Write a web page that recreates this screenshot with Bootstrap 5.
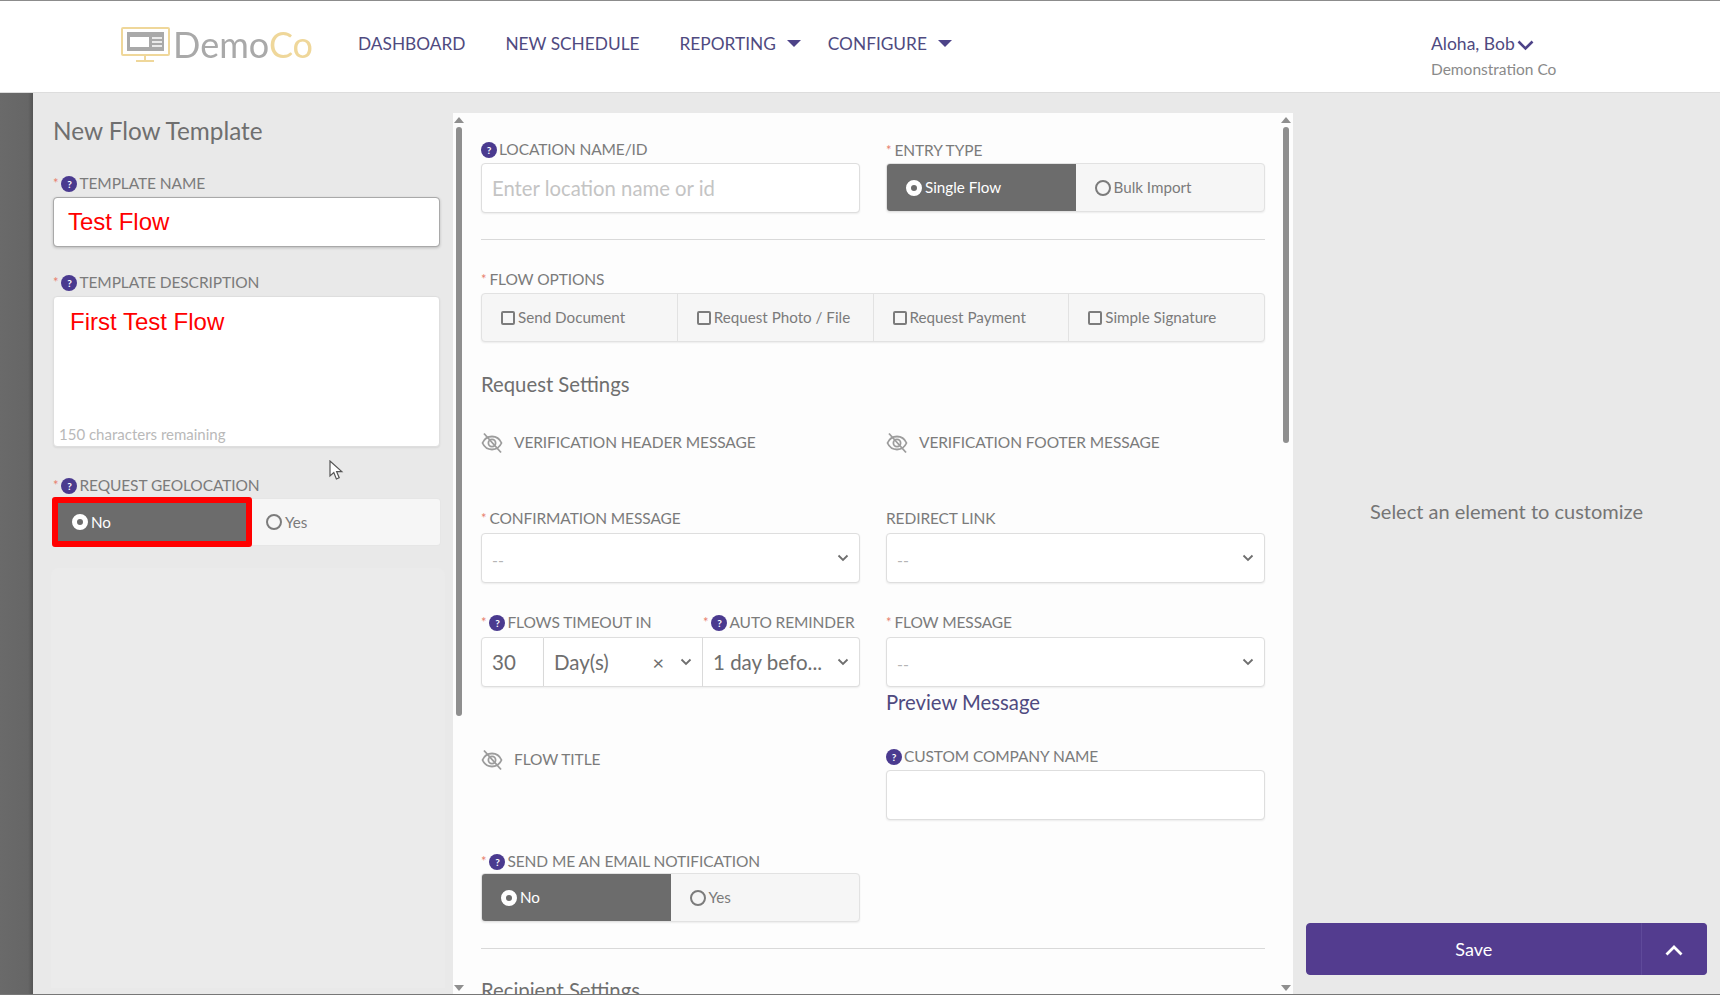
<!DOCTYPE html>
<html lang="en">
<head>
<meta charset="UTF-8">
<meta name="viewport" content="width=device-width, initial-scale=1.0">
<title>New Flow Template</title>
<link href="https://cdn.jsdelivr.net/npm/bootstrap@5.3.3/dist/css/bootstrap.min.css" rel="stylesheet">
<style>
html, body { height: 995px; overflow: hidden; }
body { font-family: Lato, "Open Sans", sans-serif; color: #757575; background: #e9e9e9; border-top: 1px solid #8c8c8c; border-bottom: 1px solid #777; }

/* header */
.top-bar { height: 92px; background: #fff; border-bottom: 1px solid #ddd; padding: 0 0 6px 121px; }
.brand-mark { font-size: 36px; line-height: 1; color: #a9a9a9; margin-left: 3px; margin-top: -2px; }
.brand-mark span { color: #efd79a; }
.brand-wrap { width: 237px; margin-top: 3px; filter: blur(.5px); }
.top-link { font-size: 17.3px; color: #4f4a80; text-decoration: none; line-height: 24px; }
.caret-down { display: inline-block; width: 0; height: 0; border-left: 7px solid transparent; border-right: 7px solid transparent; border-top: 7px solid #4d4388; margin-left: 11px; vertical-align: 3px; }
.user-box { position: absolute; left: 1431px; top: 32px; }
.user-name { font-size: 17.5px; color: #4f4a80; line-height: 24px; }
.user-name svg { margin-left: -2px; }
.user-co { font-size: 15.5px; color: #8a8a8a; line-height: 22px; margin-top: 2px; }

/* columns */
.page-wrap { height: 901px; }
.dark-strip { width: 33px; background: linear-gradient(90deg, #6a6a6a 0, #666 85%, #555 100%); }
.left-col { width: 420px; padding: 0 13px 0 20px; }
.page-title { font-size: 24.3px; font-weight: 400; color: #6f6f6f; line-height: 32px; margin: 22px 0 0 0; }
.main-col { width: 840px; background: #fdfdfd; margin-top: 20px; }
.right-col { width: 427px; padding: 20px 13px 19px 13px; }

/* scroll tracks */
.scroll-track { width: 12px; flex: none; padding-top: 3px; }
.scroll-up { width: 0; height: 0; border-left: 5px solid transparent; border-right: 5px solid transparent; border-bottom: 6px solid #8f8f8f; margin: 1px auto 4px; }
.scroll-down { width: 0; height: 0; border-left: 5px solid transparent; border-right: 5px solid transparent; border-top: 6px solid #8f8f8f; margin: 0 auto; }
.scroll-thumb { width: 6px; background: #8f8f8f; border-radius: 3px; margin: 0 auto; }
.main-form { width: 812px; flex: none; padding: 0 0 0 16px; overflow: hidden; }
.main-form .row { --bs-gutter-x: 26px; --bs-gutter-y: 0; width: 810px; margin-left: 0; margin-right: 0; }
.main-form .row > * { padding-left: 0; padding-right: 26px; }

/* labels */
.fld-label { display: block; font-size: 15.5px; line-height: 20px; color: #7b7b7b; white-space: nowrap; letter-spacing: -.1px; }
.req { color: #e8806f; font-size: 13px; margin-right: 3px; vertical-align: 1px; }
.help-dot { display: inline-block; width: 16px; height: 16px; border-radius: 50%; background: #4a3a8f; color: #fff; font-size: 10px; font-weight: 700; line-height: 16px; text-align: center; margin-right: 2px; vertical-align: 1.500px; }

/* controls */
.fld-input { height: 50px; border: 1px solid #dedede; border-radius: 4px; background-color: #fff; box-shadow: 0 1px 2px rgba(0,0,0,.07); font-size: 20.3px; color: #6e6e6e; padding: 0 10px; }
.fld-input::placeholder { color: #c4c4c4; }
.fld-input:focus { border-color: #dedede; box-shadow: none; }
.annot-input { height: 50px; border: 1px solid #a9a9a9; box-shadow: 0 1px 3px rgba(0,0,0,.2); color: #f00; font-family: "Liberation Sans", Arial, sans-serif; font-size: 24px; padding: 0 14px; border-radius: 4px; }
.note-box { height: 151px; background: #fff; border: 1px solid #dedede; border-radius: 4px; box-shadow: 0 1px 2px rgba(0,0,0,.08); padding: 10px 16px 0; color: #f00; font-family: "Liberation Sans", Arial, sans-serif; font-size: 24px; line-height: 30px; position: relative; }
.note-count { position: absolute; left: 5px; bottom: 2px; font-family: Lato, sans-serif; font-size: 15px; line-height: 20px; color: #b9b9b9; }
.pick-select { height: 50px; display: flex; align-items: center; justify-content: space-between; border: 1px solid #dedede; border-radius: 4px; background: #fff; box-shadow: 0 1px 2px rgba(0,0,0,.07); padding: 0 10px; font-size: 20.5px; color: #6e6e6e; }
.pick-empty { font-size: 16px; color: #b5b5b5; padding-top: 4px; }
.chev-mini { width: 12px; height: 8px; flex: none; }
.clear-x { font-size: 20px; line-height: 1; }

/* toggle groups */
.seg-group { height: 49px; border: 1px solid #e2e2e2; border-radius: 4px; background: #f6f6f6; box-shadow: 0 1px 2px rgba(0,0,0,.07); overflow: hidden; }
.seg-item { flex: 1 1 0; display: flex; align-items: center; padding-left: 19px; font-size: 15.2px; color: #7b7b7b; border-right: 1px solid #e2e2e2; }
.seg-item:last-child { border-right: 0; }
.seg-item.is-on { background: #6c6c6c; color: #fff; border-right: 0; }
.radio-dot { width: 16px; height: 16px; border-radius: 50%; border: 2px solid #7c7c7c; margin-right: 3px; flex: none; }
.is-on .radio-dot { background: #6c6c6c; border: 5px solid #fff; }
.tick-box { width: 14px; height: 14px; border: 2px solid #7c7c7c; border-radius: 2px; margin-right: 3px; flex: none; }
.geo-group { height: 50px; width: 391px; margin-left: -2px; margin-top: 2px; border-color: transparent; background: none; box-shadow: none; overflow: visible; }
.geo-group .seg-item.is-on { flex: none; width: 200px; height: 50px; border: 6px solid #f00; border-radius: 3px; padding-left: 14px; }
.geo-group .seg-item.geo-off { flex: 1 1 0; height: 48px; background: #f6f6f6; border: 1px solid #e6e6e6; border-left: 0; border-radius: 0 4px 4px 0; padding-left: 14px; }

.form-rule { margin: 0; border-top: 1px solid #d9d9d9; opacity: 1; width: 784px; }
.sec-title { font-size: 20.3px; color: #6f6f6f; line-height: 28px; font-weight: 400; margin: 0; }
.hidden-fld { display: flex; align-items: center; height: 24px; font-size: 15.5px; color: #7b7b7b; letter-spacing: -.1px; }
.eye-off { width: 22px; height: 22px; margin-right: 11px; flex: none; }
.preview-link { font-size: 20.3px; line-height: 26px; color: #4f4a80; text-decoration: none; display: block; margin-top: 2px; }

/* right side */
.hint-text { font-size: 20px; color: #757575; text-align: center; margin-top: 383px; }
.save-group { height: 52px; }
.save-btn { background: #533c8f; border-color: #533c8f; color: #fff; font-size: 18px; border-radius: 4px 0 0 4px; width: 335px; }
.more-btn { background: #533c8f; border-color: #533c8f; border-left: 1px solid #5f4a9a; border-radius: 0 4px 4px 0; width: 66px; padding: 0; }
.lower-card { height: 420px; margin: 21px 0 0 -2px; width: 394px; background: #ebebeb; border-radius: 8px 8px 0 0; }
.mouse-arrow { position: absolute; left: 329px; top: 460px; width: 15px; height: 21px; }
</style>
</head>
<body>
<nav class="top-bar d-flex align-items-center">
    <div class="brand-wrap d-flex align-items-center">
        <svg width="49" height="36" viewBox="0 0 49 36" fill="none">
            <rect x="1" y="1" width="47" height="27" rx="1" stroke="#efd79a" stroke-width="2"/>
            <rect x="6" y="5" width="37" height="19" fill="#a9a9a9"/>
            <rect x="9" y="10" width="19" height="10" fill="#fff"/>
            <path d="M31 11h10M31 15h10M31 19h10" stroke="#fff" stroke-width="1.5"/>
            <path d="M24 28v6M15 34h18" stroke="#efd79a" stroke-width="2"/>
        </svg>
        <div class="brand-mark">Demo<span>Co</span></div>
    </div>
    <a class="top-link" href="#">DASHBOARD</a>
    <a class="top-link" style="margin-left:40px" href="#">NEW SCHEDULE</a>
    <a class="top-link" style="margin-left:40px" href="#">REPORTING<i class="caret-down"></i></a>
    <a class="top-link" style="margin-left:27px" href="#">CONFIGURE<i class="caret-down"></i></a>
    <div class="user-box">
        <div class="user-name">Aloha, Bob <svg width="17" height="11" viewBox="0 0 17 11" fill="none"><path d="M1.500 1.500 8.500 8.500l7-7" stroke="#4d4388" stroke-width="2.600"/></svg></div>
        <div class="user-co">Demonstration Co</div>
    </div>
</nav>

<div class="page-wrap d-flex">
    <div class="dark-strip"></div>

    <div class="left-col">
        <h1 class="page-title">New Flow Template</h1>
        <label class="fld-label" style="margin-top:26px"><span class="req">*</span><span class="help-dot">?</span>TEMPLATE NAME</label>
        <input class="form-control annot-input mt-1" value="Test Flow">
        <label class="fld-label" style="margin-top:25px"><span class="req">*</span><span class="help-dot">?</span>TEMPLATE DESCRIPTION</label>
        <div class="note-box mt-1">First Test Flow<div class="note-count">150 characters remaining</div></div>
        <label class="fld-label" style="margin-top:28px"><span class="req">*</span><span class="help-dot">?</span>REQUEST GEOLOCATION</label>
        <div class="seg-group geo-group d-flex align-items-center">
            <div class="seg-item is-on"><span class="radio-dot"></span>No</div>
            <div class="seg-item geo-off"><span class="radio-dot"></span>Yes</div>
        </div>
        <div class="lower-card"></div>
    </div>

    <div class="main-col d-flex">
        <div class="scroll-track d-flex flex-column">
            <div class="scroll-up"></div>
            <div class="scroll-thumb" style="height:589px"></div>
            <div class="scroll-down mt-auto" style="margin-bottom:3px"></div>
        </div>

        <div class="main-form">
            <div class="row" style="padding-top:26px">
                <div class="col-6">
                    <label class="fld-label"><span class="help-dot">?</span>LOCATION NAME/ID</label>
                    <input class="form-control fld-input mt-1" placeholder="Enter location name or id">
                </div>
                <div class="col-6">
                    <label class="fld-label" style="padding-top:1px"><span class="req">*</span>ENTRY TYPE</label>
                    <div class="seg-group d-flex" style="margin-top:3px">
                        <div class="seg-item is-on"><span class="radio-dot"></span>Single Flow</div>
                        <div class="seg-item"><span class="radio-dot"></span>Bulk Import</div>
                    </div>
                </div>
            </div>
            <hr class="form-rule" style="margin-top:26px">

            <label class="fld-label" style="margin-top:29px"><span class="req">*</span>FLOW OPTIONS</label>
            <div class="seg-group d-flex mt-1" style="width:784px">
                <div class="seg-item"><span class="tick-box"></span>Send Document</div>
                <div class="seg-item"><span class="tick-box"></span>Request Photo / File</div>
                <div class="seg-item"><span class="tick-box"></span>Request Payment</div>
                <div class="seg-item"><span class="tick-box"></span>Simple Signature</div>
            </div>

            <h2 class="sec-title" style="margin-top:28px">Request Settings</h2>

            <div class="row" style="margin-top:33px">
                <div class="col-6">
                    <div class="hidden-fld">
                        <svg class="eye-off" viewBox="0 0 22 22" fill="none" stroke="#9c9c9c" stroke-width="1.800"><path d="M1.500 11C3.500 6.500 7 4.500 11 4.500S18.500 6.500 20.500 11C18.500 15.500 15 17.500 11 17.500S3.500 15.500 1.500 11Z"/><circle cx="11" cy="11" r="3.600"/><path d="M3 1.500 20 20.500"/></svg>
                        VERIFICATION HEADER MESSAGE
                    </div>
                </div>
                <div class="col-6">
                    <div class="hidden-fld">
                        <svg class="eye-off" viewBox="0 0 22 22" fill="none" stroke="#9c9c9c" stroke-width="1.800"><path d="M1.500 11C3.500 6.500 7 4.500 11 4.500S18.500 6.500 20.500 11C18.500 15.500 15 17.500 11 17.500S3.500 15.500 1.500 11Z"/><circle cx="11" cy="11" r="3.600"/><path d="M3 1.500 20 20.500"/></svg>
                        VERIFICATION FOOTER MESSAGE
                    </div>
                </div>
            </div>

            <div class="row" style="margin-top:53px">
                <div class="col-6">
                    <label class="fld-label"><span class="req">*</span>CONFIRMATION MESSAGE</label>
                    <div class="pick-select" style="margin-top:5px"><span class="pick-empty">--</span><svg class="chev-mini" viewBox="0 0 12 8" fill="none"><path d="M1.500 1.500 6 6l4.500-4.500" stroke="#6e6e6e" stroke-width="1.800"/></svg></div>
                </div>
                <div class="col-6">
                    <label class="fld-label">REDIRECT LINK</label>
                    <div class="pick-select" style="margin-top:5px"><span class="pick-empty">--</span><svg class="chev-mini" viewBox="0 0 12 8" fill="none"><path d="M1.500 1.500 6 6l4.500-4.500" stroke="#6e6e6e" stroke-width="1.800"/></svg></div>
                </div>
            </div>

            <div class="row" style="margin-top:29px">
                <div class="col-6">
                    <div class="d-flex">
                        <label class="fld-label" style="width:222px"><span class="req">*</span><span class="help-dot">?</span>FLOWS TIMEOUT IN</label>
                        <label class="fld-label"><span class="req">*</span><span class="help-dot">?</span>AUTO REMINDER</label>
                    </div>
                    <div class="d-flex" style="margin-top:5px">
                        <div class="pick-select" style="width:63px;border-radius:4px 0 0 4px">30</div>
                        <div class="pick-select" style="width:159px;border-radius:0;border-left:0">
                            <span>Day(s)</span>
                            <span class="d-flex align-items-center gap-3"><span class="clear-x">×</span><svg class="chev-mini" viewBox="0 0 12 8" fill="none"><path d="M1.500 1.500 6 6l4.500-4.500" stroke="#6e6e6e" stroke-width="1.800"/></svg></span>
                        </div>
                        <div class="pick-select" style="width:157px;border-radius:0 4px 4px 0;border-left:0">
                            <span>1 day befo...</span><svg class="chev-mini" viewBox="0 0 12 8" fill="none"><path d="M1.500 1.500 6 6l4.500-4.500" stroke="#6e6e6e" stroke-width="1.800"/></svg>
                        </div>
                    </div>
                </div>
                <div class="col-6">
                    <label class="fld-label"><span class="req">*</span>FLOW MESSAGE</label>
                    <div class="pick-select" style="margin-top:5px"><span class="pick-empty">--</span><svg class="chev-mini" viewBox="0 0 12 8" fill="none"><path d="M1.500 1.500 6 6l4.500-4.500" stroke="#6e6e6e" stroke-width="1.800"/></svg></div>
                    <a class="preview-link" href="#">Preview Message</a>
                </div>
            </div>

            <div class="row" style="margin-top:-1px">
                <div class="col-6">
                    <div class="hidden-fld" style="margin-top:34px">
                        <svg class="eye-off" viewBox="0 0 22 22" fill="none" stroke="#9c9c9c" stroke-width="1.800"><path d="M1.500 11C3.500 6.500 7 4.500 11 4.500S18.500 6.500 20.500 11C18.500 15.500 15 17.500 11 17.500S3.500 15.500 1.500 11Z"/><circle cx="11" cy="11" r="3.600"/><path d="M3 1.500 20 20.500"/></svg>
                        FLOW TITLE
                    </div>
                </div>
                <div class="col-6">
                    <label class="fld-label" style="margin-top:32px"><span class="help-dot">?</span>CUSTOM COMPANY NAME</label>
                    <input class="form-control fld-input" style="margin-top:4px">
                </div>
            </div>

            <div class="row" style="margin-top:31px">
                <div class="col-6">
                    <label class="fld-label"><span class="req">*</span><span class="help-dot">?</span>SEND ME AN EMAIL NOTIFICATION</label>
                    <div class="seg-group d-flex" style="margin-top:2px">
                        <div class="seg-item is-on"><span class="radio-dot"></span>No</div>
                        <div class="seg-item"><span class="radio-dot"></span>Yes</div>
                    </div>
                </div>
            </div>
            <hr class="form-rule" style="margin-top:26px">
            <h2 class="sec-title" style="margin-top:27px">Recipient Settings</h2>
        </div>

        <div class="scroll-track d-flex flex-column ms-auto" style="margin-right:1px">
            <div class="scroll-up"></div>
            <div class="scroll-thumb" style="height:316px"></div>
            <div class="scroll-down mt-auto" style="margin-bottom:3px"></div>
        </div>
    </div>

    <div class="right-col d-flex flex-column">
        <div class="hint-text">Select an element to customize</div>
        <div class="btn-group save-group mt-auto">
            <button class="btn save-btn" type="button">Save</button>
            <button class="btn more-btn" type="button"><svg width="18" height="11" viewBox="0 0 18 11" fill="none"><path d="M1.500 9.500 9 2l7.500 7.500" stroke="#fff" stroke-width="2.800"/></svg></button>
        </div>
    </div>
</div>

<svg class="mouse-arrow" viewBox="0 0 15 21" fill="#fff" stroke="#555" stroke-width="1.200"><path d="M1 1v15l3.800-3.400 2.600 6.400 2.800-1.200-2.600-6.200h5.200Z"/></svg>

<script src="https://cdn.jsdelivr.net/npm/bootstrap@5.3.3/dist/js/bootstrap.bundle.min.js"></script>
</body>
</html>
